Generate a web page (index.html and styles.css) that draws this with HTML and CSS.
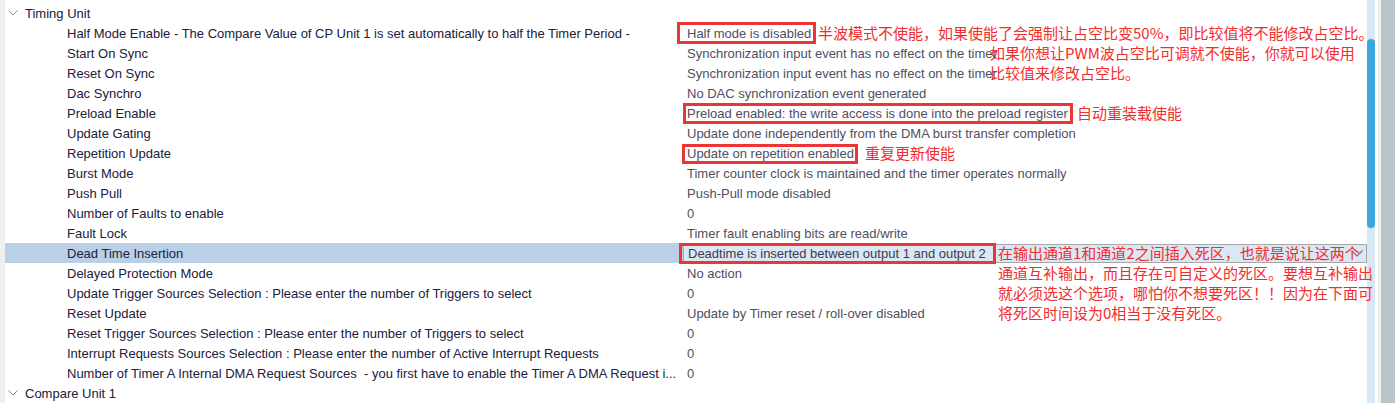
FILE: index.html
```html
<!DOCTYPE html>
<html>
<head>
<meta charset="utf-8">
<link rel="stylesheet" href="styles.css">
</head>
<body>
<div class="app">
  <div class="gutter"></div>
  <div class="tree">
    <div class="row group">
      <div class="label"><svg class="chev" width="10" height="6" viewBox="0 0 10 6"><path d="M0.5 0.5 L5 5 L9.5 0.5" fill="none" stroke="#8a8a8a" stroke-width="1"/></svg>Timing Unit</div>
      <div class="value"></div>
    </div>
    <div class="row">
      <div class="label">Half Mode Enable - The Compare Value of CP Unit 1 is set automatically to half the Timer Period -</div>
      <div class="value">Half mode is disabled
        <span class="box b-half"></span>
        <span class="note n-half1">半波模式不使能，如果使能了会强制让占空比变50%，即比较值将不能修改占空比。</span>
        <span class="note n-half2">如果你想让PWM波占空比可调就不使能，你就可以使用<br>比较值来修改占空比。</span>
      </div>
    </div>
    <div class="row"><div class="label">Start On Sync</div><div class="value">Synchronization input event has no effect on the timer</div></div>
    <div class="row"><div class="label">Reset On Sync</div><div class="value">Synchronization input event has no effect on the timer</div></div>
    <div class="row"><div class="label">Dac Synchro</div><div class="value">No DAC synchronization event generated</div></div>
    <div class="row">
      <div class="label">Preload Enable</div>
      <div class="value">Preload enabled: the write access is done into the preload register
        <span class="box b-preload"></span>
        <span class="note n-preload">自动重装载使能</span>
      </div>
    </div>
    <div class="row"><div class="label">Update Gating</div><div class="value">Update done independently from the DMA burst transfer completion</div></div>
    <div class="row">
      <div class="label">Repetition Update</div>
      <div class="value">Update on repetition enabled
        <span class="box b-rep"></span>
        <span class="note n-rep">重复更新使能</span>
      </div>
    </div>
    <div class="row"><div class="label">Burst Mode</div><div class="value">Timer counter clock is maintained and the timer operates normally</div></div>
    <div class="row"><div class="label">Push Pull</div><div class="value">Push-Pull mode disabled</div></div>
    <div class="row"><div class="label">Number of Faults to enable</div><div class="value">0</div></div>
    <div class="row"><div class="label">Fault Lock</div><div class="value">Timer fault enabling bits are read/write</div></div>
    <div class="row selected">
      <div class="label">Dead Time Insertion</div>
      <div class="value combo-cell">
        <div class="combo">
          <span class="combo-text">Deadtime is inserted between output 1 and output 2</span>
          <svg class="combo-chev" width="12" height="7" viewBox="0 0 12 7"><path d="M0.5 0.5 L6 6 L11.5 0.5" fill="none" stroke="#7a7a7a" stroke-width="1.2"/></svg>
        </div>
        <span class="box b-dead"></span>
        <span class="note n-dead">在输出通道1和通道2之间插入死区，也就是说让这两个<br>通道互补输出，而且存在可自定义的死区。要想互补输出<br>就必须选这个选项，哪怕你不想要死区！！因为在下面可<br>将死区时间设为0相当于没有死区。</span>
      </div>
    </div>
    <div class="row"><div class="label">Delayed Protection Mode</div><div class="value">No action</div></div>
    <div class="row"><div class="label">Update Trigger Sources Selection : Please enter the number of Triggers to select</div><div class="value">0</div></div>
    <div class="row"><div class="label">Reset Update</div><div class="value">Update by Timer reset / roll-over disabled</div></div>
    <div class="row"><div class="label">Reset Trigger Sources Selection : Please enter the number of Triggers to select</div><div class="value">0</div></div>
    <div class="row"><div class="label">Interrupt Requests Sources Selection : Please enter the number of Active Interrupt Requests</div><div class="value">0</div></div>
    <div class="row"><div class="label">Number of Timer A Internal DMA Request Sources &nbsp;- you first have to enable the Timer A DMA Request i...</div><div class="value">0</div></div>
    <div class="row group">
      <div class="label"><svg class="chev" width="10" height="6" viewBox="0 0 10 6"><path d="M0.5 0.5 L5 5 L9.5 0.5" fill="none" stroke="#8a8a8a" stroke-width="1"/></svg>Compare Unit 1</div>
      <div class="value"></div>
    </div>
  </div>
  <div class="scrollbar">
    <div class="track"><div class="thumb"></div></div>
    <div class="sep1"></div>
    <div class="sep2"></div>
    <div class="edge"></div>
  </div>
</div>
</body>
</html>
```

FILE: styles.css
```css
html, body {
  margin: 0;
  padding: 0;
  background: #ffffff;
}
body {
  font-family: "Liberation Sans", Arial, sans-serif;
  font-size: 13px;
  overflow: hidden;
}
.app {
  display: flex;
  width: 1395px;
  height: 403px;
  overflow: hidden;
}
.gutter {
  width: 5px;
  background: #f0f0f0;
  flex: none;
}
.tree {
  flex: 1;
  padding-top: 3px;
  background: #ffffff;
}
.row {
  display: grid;
  grid-template-columns: 678px 1fr;
  height: 20px;
  line-height: 21px;
  white-space: nowrap;
}
.label {
  padding-left: 62px;
  color: #20203c;
  overflow: hidden;
}
.row.group .label {
  padding-left: 3px;
  display: flex;
  align-items: center;
}
.chev {
  margin-right: 7px;
  margin-top: -1px;
}
.value {
  position: relative;
  padding-left: 4px;
  color: #4f4f5e;
}
.row.selected .label {
  background: #bad0e7;
}
.combo-cell {
  padding-left: 0;
}
.combo {
  display: flex;
  align-items: center;
  justify-content: space-between;
  height: 19px;
  margin-top: 1px;
  box-sizing: border-box;
  border: 1px solid #a6a6a6;
  background: #dae7f4;
  line-height: 18px;
  padding-left: 4px;
  padding-right: 3px;
  color: #3c3c4c;
}
.combo-chev {
  flex: none;
}
.box {
  position: absolute;
  border: 3px solid #ee3535;
  box-sizing: border-box;
  pointer-events: none;
}
.b-half { left: -6px; top: -1px; width: 139px; height: 22px; }
.b-preload { left: 0; top: 0; width: 390px; height: 21px; }
.b-rep { left: -1px; top: 1px; width: 176px; height: 20px; }
.b-dead { left: -4px; top: 0; width: 317px; height: 21px; }
.note {
  position: absolute;
  font-family: "Noto Sans CJK SC", "Liberation Sans", sans-serif;
  font-size: 15px;
  line-height: 20px;
  color: #f42c2c;
  white-space: nowrap;
}
.n-half1 { left: 135px; top: 0; }
.n-half2 { left: 307px; top: 20px; }
.n-preload { left: 394px; top: 0; }
.n-rep { left: 182px; top: 0; }
.n-dead { left: 315px; top: 0; }
.scrollbar {
  flex: none;
  width: 28px;
  display: flex;
  height: 403px;
}
.track {
  width: 8px;
  background: #d7e7f5;
  padding-top: 39px;
  box-sizing: border-box;
}
.thumb {
  width: 8px;
  height: 189px;
  border-radius: 4px;
  background: #3aa8de;
}
.sep1 {
  width: 3px;
  background: #ffffff;
}
.sep2 {
  width: 3px;
  background: #efefef;
}
.edge {
  flex: 1;
  background: #b9c4ca;
}
```
